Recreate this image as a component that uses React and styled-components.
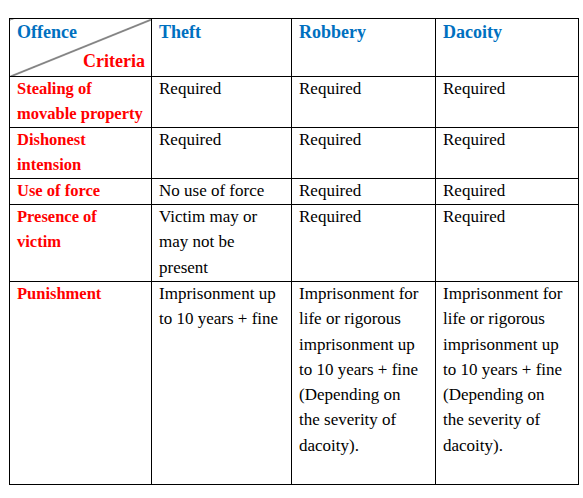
import styled, { createGlobalStyle } from 'styled-components';

const GlobalStyle = createGlobalStyle`
  html, body {
    margin: 0;
    padding: 0;
    background: #ffffff;
  }
`;

const Page = styled.div`
  padding: 18px 0 0 9px;
  font-family: 'Liberation Serif', 'Times New Roman', serif;
  color: #000;
`;

const Table = styled.table`
  border-collapse: collapse;
  table-layout: fixed;
  width: 569px;
`;

const Cell = styled.td`
  border: 1px solid #000;
  vertical-align: top;
  padding: 0 6px 0 7px;
  font-size: 17px;
  line-height: 25.3px;
  white-space: nowrap;
  height: ${(p) => p.$h}px;
  box-sizing: border-box;
`;

const Lines = styled.div`
  margin-top: ${(p) => (p.$head ? '1px' : '-1px')};
`;

const CornerCell = styled(Cell)`
  background: linear-gradient(
    to bottom right,
    transparent calc(50% - 0.9px),
    #000 50%,
    transparent calc(50% + 0.9px)
  );
`;

const HeadText = styled.div`
  font-size: 18px;
  font-weight: 700;
  color: ${(p) => (p.$red ? '#ff0000' : '#0070c0')};
  text-align: ${(p) => (p.$right ? 'right' : 'left')};
  margin-top: ${(p) => (p.$right ? '4px' : '0')};
`;

const Label = styled.div`
  font-size: 16.5px;
  font-weight: 700;
  color: #ff0000;
`;

const Line = styled.div``;

const columns = ['Theft', 'Robbery', 'Dacoity'];

const punishment = [
  'Imprisonment for',
  'life or rigorous',
  'imprisonment up',
  'to 10 years + fine',
  '(Depending on',
  'the severity of',
  'dacoity).',
];

const rows = [
  {
    label: ['Stealing of', 'movable property'],
    cells: [['Required'], ['Required'], ['Required']],
    h: 51,
  },
  {
    label: ['Dishonest', 'intension'],
    cells: [['Required'], ['Required'], ['Required']],
    h: 51,
  },
  {
    label: ['Use of force'],
    cells: [['No use of force'], ['Required'], ['Required']],
    h: 26,
  },
  {
    label: ['Presence of', 'victim'],
    cells: [['Victim may or', 'may not be', 'present'], ['Required'], ['Required']],
    h: 77,
  },
  {
    label: ['Punishment'],
    cells: [['Imprisonment up', 'to 10 years + fine'], punishment, punishment],
    h: 203,
  },
];

const App = () => (
  <Page>
    <GlobalStyle />
    <Table>
      <colgroup>
        <col style={{ width: 142 }} />
        <col style={{ width: 140 }} />
        <col style={{ width: 144 }} />
        <col style={{ width: 143 }} />
      </colgroup>
      <tbody>
        <tr>
          <CornerCell $h={58}>
            <Lines $head>
              <HeadText>Offence</HeadText>
              <HeadText $red $right>
                Criteria
              </HeadText>
            </Lines>
          </CornerCell>
          {columns.map((c) => (
            <Cell key={c} $h={58}>
              <Lines $head>
                <HeadText>{c}</HeadText>
              </Lines>
            </Cell>
          ))}
        </tr>
        {rows.map((r) => (
          <tr key={r.label[0]}>
            <Cell $h={r.h}>
              <Lines>
                {r.label.map((l) => (
                  <Label key={l}>{l}</Label>
                ))}
              </Lines>
            </Cell>
            {r.cells.map((lines, i) => (
              <Cell key={i} $h={r.h}>
                <Lines>
                  {lines.map((l) => (
                    <Line key={l}>{l}</Line>
                  ))}
                </Lines>
              </Cell>
            ))}
          </tr>
        ))}
      </tbody>
    </Table>
  </Page>
);

export default App;
